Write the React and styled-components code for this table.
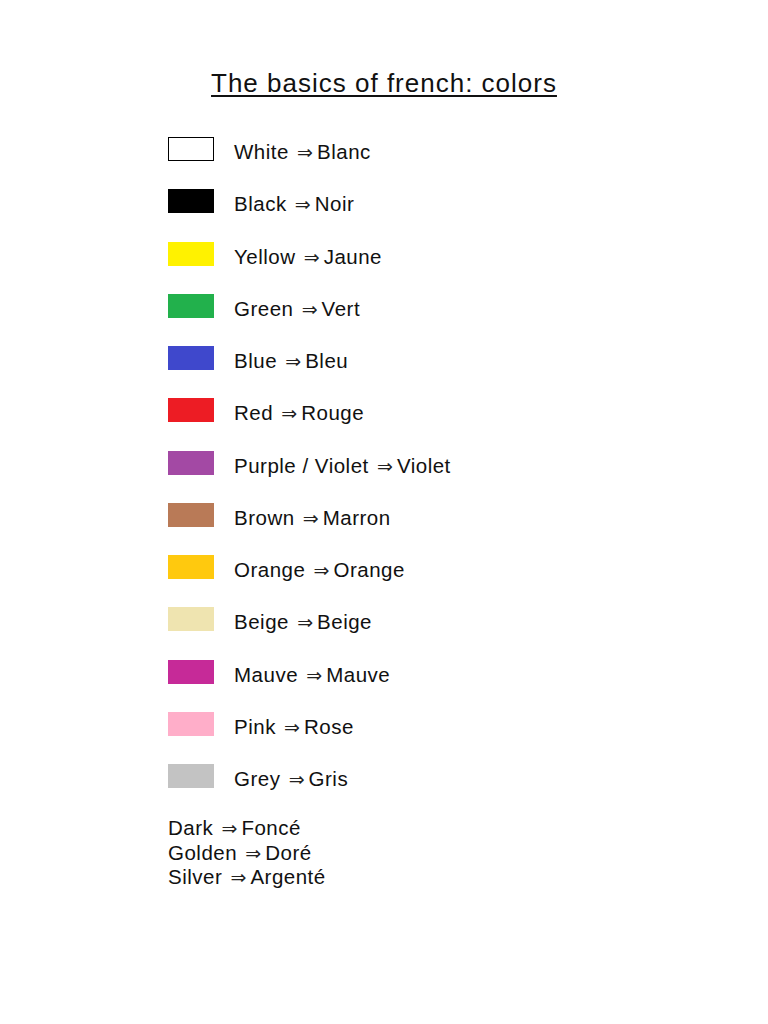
import React from "react";
import styled, { createGlobalStyle } from "styled-components";

const Global = createGlobalStyle`
  html, body { margin: 0; padding: 0; background: #ffffff; }
  body { font-family: "Liberation Sans", Arial, sans-serif; color: #111; }
`;

const Page = styled.div`
  width: 768px;
  min-height: 1024px;
  box-sizing: border-box;
  padding-top: 68px;
  display: flex;
  flex-direction: column;
  align-items: center;
`;

const Title = styled.h1`
  margin: 0;
  font-family: "Liberation Sans", Arial, sans-serif;
  font-weight: normal;
  font-size: 26px;
  line-height: 30px;
  letter-spacing: 1px;
  text-decoration: underline;
  text-decoration-thickness: 2px;
  text-underline-offset: 3px;
  color: #111;
`;

const Sheet = styled.div`
  align-self: stretch;
  padding-left: 168px;
  margin-top: 39px;
  display: flex;
  flex-direction: column;
`;

const Row = styled.div`
  height: 52.25px;
  display: flex;
  align-items: flex-start;
  gap: 20px;
`;

const Swatch = styled.div`
  width: 46px;
  height: 24px;
  box-sizing: border-box;
  background: ${(p) => p.$color};
  border: ${(p) => (p.$outlined ? "1px solid #000" : "none")};
`;

const Label = styled.div`
  padding-top: 3px;
  font-size: 20.5px;
  line-height: 24px;
  letter-spacing: 0.5px;
  white-space: nowrap;
`;

const Arrow = styled.span`
  font-family: "DejaVu Sans", sans-serif;
  font-size: 19px;
  line-height: 0;
  letter-spacing: 0;
  margin: 0 4px 0 2px;
  color: #222;
`;

const Footer = styled.div`
  display: flex;
  flex-direction: column;
`;

const Line = styled.div`
  font-size: 20.5px;
  line-height: 24.5px;
  letter-spacing: 0.5px;
  white-space: nowrap;
`;

const colors = [
  ["White", "Blanc", "#ffffff", true],
  ["Black", "Noir", "#000000"],
  ["Yellow", "Jaune", "#fff200"],
  ["Green", "Vert", "#22b14c"],
  ["Blue", "Bleu", "#3f48cc"],
  ["Red", "Rouge", "#ed1c24"],
  ["Purple / Violet", "Violet", "#a349a4"],
  ["Brown", "Marron", "#b97a57"],
  ["Orange", "Orange", "#ffc90e"],
  ["Beige", "Beige", "#efe4b0"],
  ["Mauve", "Mauve", "#c62a98"],
  ["Pink", "Rose", "#ffaec9"],
  ["Grey", "Gris", "#c3c3c3"],
];

const extras = [
  ["Dark", "Foncé"],
  ["Golden", "Doré"],
  ["Silver", "Argenté"],
];

export default function App() {
  return (
    <>
      <Global />
      <Page>
        <Title>The basics of french: colors</Title>
        <Sheet>
          {colors.map(([en, fr, c, outlined]) => (
            <Row key={en}>
              <Swatch $color={c} $outlined={outlined} />
              <Label>
                {en} <Arrow>⇒</Arrow>
                {fr}
              </Label>
            </Row>
          ))}
          <Footer>
            {extras.map(([en, fr]) => (
              <Line key={en}>
                {en} <Arrow>⇒</Arrow>
                {fr}
              </Line>
            ))}
          </Footer>
        </Sheet>
      </Page>
    </>
  );
}
